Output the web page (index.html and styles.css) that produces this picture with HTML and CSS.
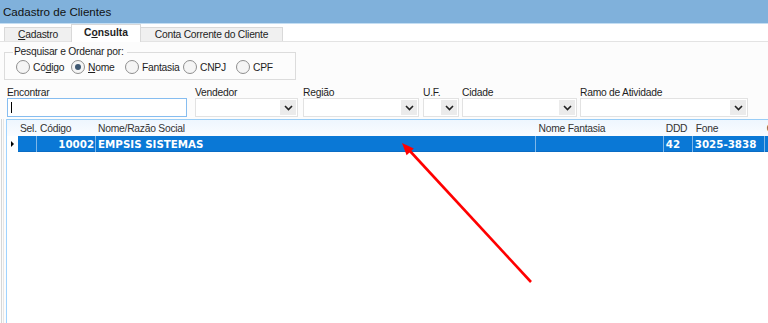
FILE: index.html
```html
<!DOCTYPE html>
<html lang="pt-BR">
<head>
  <meta charset="UTF-8" />
  <title>Cadastro de Clientes</title>
  <link rel="stylesheet" href="styles.css">
</head>
<body>
  <div class="window">
    <div class="titlebar">Cadastro de Clientes</div>

    <div class="tabs">
      <div class="tab tab-cad"><u>C</u>adastro</div>
      <div class="tab tab-con active">C<u>o</u>nsulta</div>
      <div class="tab tab-cc">Conta Corrente do Cliente</div>
    </div>

    <div class="content">
      <fieldset class="group">
        <legend>Pesquisar e Ordenar por:</legend>
        <label class="radio"><span class="dot"></span><span>Có<u>d</u>igo</span></label>
        <label class="radio"><span class="dot checked"></span><span><u>N</u>ome</span></label>
        <label class="radio"><span class="dot"></span><span>Fantasia</span></label>
        <label class="radio"><span class="dot"></span><span>CNPJ</span></label>
        <label class="radio"><span class="dot"></span><span>CPF</span></label>
      </fieldset>

      <div class="filters">
        <div class="field f-find">
          <span class="lbl">Encontrar</span>
          <div class="input focus"><span class="caret"></span></div>
        </div>
        <div class="field f-vend">
          <span class="lbl">Vendedor</span>
          <div class="input combo"><span class="drop"><svg width="9" height="6" viewBox="0 0 9 6"><path d="M1 1 L4.5 4.5 L8 1" fill="none" stroke="#222" stroke-width="1.6"/></svg></span></div>
        </div>
        <div class="field f-reg">
          <span class="lbl">Região</span>
          <div class="input combo"><span class="drop"><svg width="9" height="6" viewBox="0 0 9 6"><path d="M1 1 L4.5 4.5 L8 1" fill="none" stroke="#222" stroke-width="1.6"/></svg></span></div>
        </div>
        <div class="field f-uf">
          <span class="lbl">U.F.</span>
          <div class="input combo"><span class="drop"><svg width="9" height="6" viewBox="0 0 9 6"><path d="M1 1 L4.5 4.5 L8 1" fill="none" stroke="#222" stroke-width="1.6"/></svg></span></div>
        </div>
        <div class="field f-cid">
          <span class="lbl">Cidade</span>
          <div class="input combo"><span class="drop"><svg width="9" height="6" viewBox="0 0 9 6"><path d="M1 1 L4.5 4.5 L8 1" fill="none" stroke="#222" stroke-width="1.6"/></svg></span></div>
        </div>
        <div class="field f-ramo">
          <span class="lbl">Ramo de Atividade</span>
          <div class="input combo"><span class="drop"><svg width="9" height="6" viewBox="0 0 9 6"><path d="M1 1 L4.5 4.5 L8 1" fill="none" stroke="#222" stroke-width="1.6"/></svg></span></div>
        </div>
      </div>

      <div class="grid-wrap">
        <div class="grid">
          <table>
            <colgroup>
              <col style="width:11px">
              <col style="width:19px">
              <col style="width:59px">
              <col style="width:439px">
              <col style="width:128px">
              <col style="width:29px">
              <col style="width:72px">
              <col style="width:120px">
            </colgroup>
            <thead>
              <tr>
                <th></th>
                <th>Sel.</th>
                <th class="pl3">Código</th>
                <th>Nome/Razão Social</th>
                <th class="pl3">Nome Fantasia</th>
                <th>DDD</th>
                <th class="pl3">Fone</th>
                <th>Cidade</th>
              </tr>
            </thead>
            <tbody>
              <tr class="selected">
                <td class="ind"><span class="tri"></span></td>
                <td></td>
                <td class="num">10002</td>
                <td>EMPSIS SISTEMAS</td>
                <td></td>
                <td>42</td>
                <td>3025-3838</td>
                <td></td>
              </tr>
            </tbody>
          </table>
        </div>
      </div>
    </div>

    <svg class="arrow" width="768" height="323" viewBox="0 0 768 323">
      <line x1="531" y1="282" x2="409" y2="150" stroke="#ff0000" stroke-width="2.6"/>
      <polygon points="402,143 406.6,155.2 413.8,148.5" fill="#ff0000"/>
    </svg>
  </div>
</body>
</html>
```

FILE: styles.css
```css
* {
  box-sizing: border-box;
}

html, body {
  margin: 0;
  height: 100%;
}

body {
  font-family: "Liberation Sans", Arial, sans-serif;
  font-size: 10.3px;
  letter-spacing: -0.25px;
  color: #1e1e1e;
  background: #fcfcfc;
  overflow: hidden;
}

.window {
  position: relative;
  height: 100vh;
  display: flex;
  flex-direction: column;
}

/* title bar */
.titlebar {
  height: 24px;
  background: #80b1db;
  border-bottom: 1px solid #c4def3;
  padding-left: 3px;
  font-size: 11.6px;
  letter-spacing: 0;
  line-height: 23px;
  color: #111;
}

/* tabs */
.tabs {
  display: flex;
  align-items: flex-end;
  height: 18px;
  padding-left: 4px;
  background: #fff;
  border-bottom: 1px solid #e3e3e3;
}

.tab {
  height: 14px;
  line-height: 13px;
  text-align: center;
  background: #f0f0f0;
  border: 1px solid #d9d9d9;
  border-bottom: none;
}

.tab-cad { width: 67px; border-right: none; }
.tab-con { width: 70px; }
.tab-cc  { width: 142px; border-left: none; }

.tab.active {
  height: 18px;
  margin-bottom: -1px;
  line-height: 15px;
  background: #fff;
  font-weight: bold;
  font-size: 10.3px;
  letter-spacing: 0;
}

/* search area */
.content {
  flex: 1;
  display: flex;
  flex-direction: column;
  min-height: 0;
}

.group {
  margin: 4px 0 0 4px;
  width: 292px;
  padding: 2px 8px 5px 8px;
  border: 1px solid #dcdcdc;
  display: flex;
  min-width: 0;
}

.group legend {
  padding: 0 3px 0 1px;
  line-height: 12px;
}

.radio {
  display: flex;
  align-items: center;
  gap: 3px;
  height: 14px;
  white-space: nowrap;
}

.radio:nth-of-type(1) { width: 55px; margin-left: 3px; }
.radio:nth-of-type(2) { width: 54px; }
.radio:nth-of-type(3) { width: 58px; }
.radio:nth-of-type(4) { width: 53px; }

.dot {
  width: 14px;
  height: 14px;
  border-radius: 50%;
  border: 1px solid #8e8e8e;
  background: #f5f5f5;
  display: flex;
  align-items: center;
  justify-content: center;
  flex-shrink: 0;
}

.dot.checked::after {
  content: "";
  width: 6px;
  height: 6px;
  border-radius: 50%;
  background: #3f5872;
}

.filters {
  display: flex;
  margin-top: 7px;
  padding-left: 7px;
}

.field {
  display: flex;
  flex-direction: column;
}

.lbl {
  height: 11px;
  line-height: 11px;
  white-space: nowrap;
}

.f-find { width: 180px; }
.f-vend { width: 103px; margin-left: 8px; }
.f-reg  { width: 116px; margin-left: 5px; }
.f-uf   { width: 36px;  margin-left: 4px; }
.f-cid  { width: 115px; margin-left: 3px; }
.f-ramo { width: 168px; margin-left: 3px; }

.input {
  height: 19px;
  border: 1px solid #e2e2e2;
  background: #fff;
}

.input.focus {
  border-color: #86bdf0;
}

.caret {
  display: block;
  width: 1px;
  height: 11px;
  margin: 3px 0 0 3px;
  background: #000;
}

.combo {
  display: flex;
  justify-content: flex-end;
  padding: 1px;
}

.drop {
  width: 16px;
  height: 15px;
  background: #ebebeb;
  display: flex;
  align-items: center;
  justify-content: center;
}

/* grid */
.grid-wrap {
  flex: 1;
  margin-top: 2px;
  padding-left: 6px;
  overflow: hidden;
  background:
    linear-gradient(to right, #fcfcfc 1px, #d6d6d6 1px, #d6d6d6 2px, #fcfcfc 2px, #fcfcfc 3px, #e6e6e6 3px, #e6e6e6 4px, #fcfcfc 4px);
  background-size: 6px 100%;
  background-repeat: no-repeat;
}

.grid {
  height: 100%;
  background: #fff;
  border-top: 1px solid #99cdf6;
  border-left: 1px solid #9fd3ff;
}

.grid table {
  border-collapse: collapse;
  table-layout: fixed;
  width: 878px;
}

.grid th {
  height: 16px;
  padding: 0 0 0 2px;
  text-align: left;
  font-weight: normal;
  color: #333;
  white-space: nowrap;
  overflow: hidden;
  background: linear-gradient(#eef6fe, #fafcff);
}

.grid th.pl3 {
  padding-left: 3px;
}

.grid td {
  height: 16px;
  padding: 0 0 0 2px;
  white-space: nowrap;
  overflow: hidden;
}

.selected td {
  background: #0a78d6;
  color: #fff;
  font-family: "DejaVu Sans", sans-serif;
  font-weight: bold;
  font-size: 10.3px;
  letter-spacing: 0;
  box-shadow: inset -1px 0 #7fb7e8, inset 0 -1px #0a6cc4;
}

.selected td.ind {
  background: #fff;
  box-shadow: none;
  padding: 0;
}

.selected td.num {
  text-align: right;
  padding: 0 2px 0 0;
}

.tri {
  display: block;
  width: 0;
  height: 0;
  margin-left: 4px;
  border-top: 3px solid transparent;
  border-bottom: 3px solid transparent;
  border-left: 3px solid #000;
}

/* annotation arrow */
.arrow {
  position: absolute;
  top: 0;
  left: 0;
  pointer-events: none;
}
```
